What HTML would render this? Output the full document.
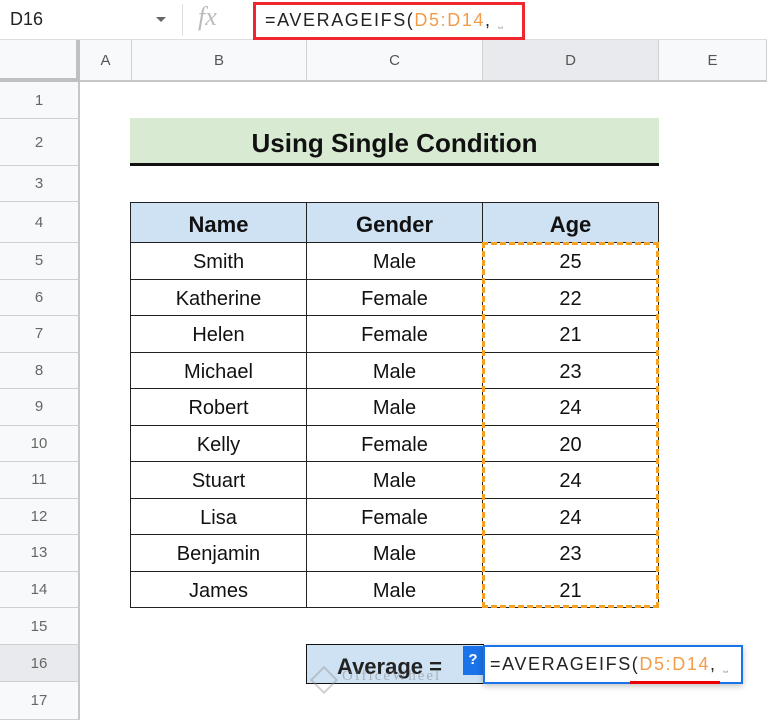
<!DOCTYPE html><html><head><style>
*{margin:0;padding:0;box-sizing:border-box}
body{width:767px;height:722px;position:relative;background:#fff;font-family:"Liberation Sans",Arial,sans-serif;overflow:hidden}
.a{position:absolute}
.rh{position:absolute;left:0;width:80px;background:#f8f9fa;border-right:2px solid #c7c7c7;border-bottom:1px solid #d0d0d0;color:#666;font-size:15px;display:flex;align-items:center;justify-content:center}
.ch{position:absolute;top:40px;height:42px;background:#f8f9fa;border-right:1px solid #d0d0d0;border-bottom:2px solid #c7c7c7;color:#555;font-size:15px;display:flex;align-items:center;justify-content:center}
.c{position:absolute;display:flex;align-items:center;justify-content:center;font-size:20px;color:#111;border-right:1.5px solid #222;border-bottom:1.5px solid #222;padding-top:4px}
.f{font-size:18px;color:#222;font-family:'Liberation Sans Narrow','Liberation Sans',sans-serif;letter-spacing:1.6px}
</style></head><body>
<div class="a" style="left:0;top:0;width:767px;height:40px;background:#fff;border-bottom:1px solid #ddd"></div>
<div class="a" style="left:10px;top:9px;font-size:18px;color:#222">D16</div>
<div class="a" style="left:156px;top:17px;width:0;height:0;border-left:5px solid transparent;border-right:5px solid transparent;border-top:5px solid #666"></div>
<div class="a" style="left:182px;top:4px;width:1px;height:32px;background:#ddd"></div>
<div class="a" style="left:198px;top:2px;font-size:26px;font-style:italic;color:#bbb;font-family:'Liberation Serif',serif">fx</div>
<div class="a" style="left:253px;top:2px;width:272px;height:38px;border:3px solid #f0262e"></div>
<div class="a f" style="left:265px;top:10px">=AVERAGEIFS(<span style="color:#f39c4a">D5:D14</span>, <span style="color:#aaa;font-size:12px">⎵</span></div>
<div class="a" style="left:0;top:40px;width:80px;height:42px;background:#f8f9fa;border-right:4px solid #c0c0c0;border-bottom:4px solid #c0c0c0"></div>
<div class="ch" style="left:80px;width:52px">A</div>
<div class="ch" style="left:132px;width:175px">B</div>
<div class="ch" style="left:307px;width:176px">C</div>
<div class="ch" style="left:483px;width:176px;background:#e8eaed">D</div>
<div class="ch" style="left:659px;width:108px">E</div>
<div class="rh" style="top:82px;height:37px">1</div>
<div class="rh" style="top:119px;height:47px">2</div>
<div class="rh" style="top:166px;height:36px">3</div>
<div class="rh" style="top:202px;height:41px">4</div>
<div class="rh" style="top:243px;height:36.5px">5</div>
<div class="rh" style="top:279.5px;height:36.5px">6</div>
<div class="rh" style="top:316px;height:36.5px">7</div>
<div class="rh" style="top:352.5px;height:36.5px">8</div>
<div class="rh" style="top:389px;height:36.5px">9</div>
<div class="rh" style="top:425.5px;height:36.5px">10</div>
<div class="rh" style="top:462px;height:36.5px">11</div>
<div class="rh" style="top:498.5px;height:36.5px">12</div>
<div class="rh" style="top:535px;height:36.5px">13</div>
<div class="rh" style="top:571.5px;height:36.5px">14</div>
<div class="rh" style="top:608px;height:37px">15</div>
<div class="rh" style="top:645px;height:37px;background:#e8eaed">16</div>
<div class="rh" style="top:682px;height:38px">17</div>
<div class="a" style="left:130px;top:118px;width:529px;height:48px;background:#d9ead3;border-bottom:3px solid #111;display:flex;align-items:center;justify-content:center;font-weight:bold;font-size:26px;color:#111;padding-top:5px">Using Single Condition</div>
<div class="a" style="left:130px;top:202px;width:529px;height:406px;border-left:1.5px solid #222;border-top:1.5px solid #222"></div>
<div class="c" style="left:131px;top:203px;width:176px;height:40px;background:#cfe2f3;font-weight:bold;font-size:22px">Name</div>
<div class="c" style="left:307px;top:203px;width:176px;height:40px;background:#cfe2f3;font-weight:bold;font-size:22px">Gender</div>
<div class="c" style="left:483px;top:203px;width:176px;height:40px;background:#cfe2f3;font-weight:bold;font-size:22px">Age</div>
<div id="rows"></div>
<script>
var d=[["Smith","Male",25],["Katherine","Female",22],["Helen","Female",21],["Michael","Male",23],["Robert","Male",24],["Kelly","Female",20],["Stuart","Male",24],["Lisa","Female",24],["Benjamin","Male",23],["James","Male",21]];
var h="";d.forEach(function(r,i){var t=243+i*36.5;
h+='<div class="c" style="left:131px;top:'+t+'px;width:176px;height:36.5px">'+r[0]+'</div>';
h+='<div class="c" style="left:307px;top:'+t+'px;width:176px;height:36.5px">'+r[1]+'</div>';
h+='<div class="c" style="left:483px;top:'+t+'px;width:176px;height:36.5px">'+r[2]+'</div>';});
document.getElementById("rows").innerHTML=h;
</script>
<div class="a" style="left:482px;top:242px;width:177px;height:366px;border:3px dashed #f6a024"></div>
<div class="a" style="left:306px;top:644px;width:178px;height:40px;background:#cfe2f3;border:1.5px solid #111;font-weight:bold;font-size:22px;color:#222;padding:9px 0 0 30px">Average =</div>
<div class="a" style="left:463px;top:646px;width:20px;height:29px;background:#1a73e8;color:#fff;font-weight:bold;font-size:15px;text-align:center;padding-top:5px">?</div>
<div class="a" style="left:483px;top:645px;width:260px;height:39px;background:#fff;border:2.5px solid #1a73e8;box-shadow:0 2px 6px rgba(0,0,0,.25)"></div>
<div class="a f" style="left:490px;top:654px">=AVERAGEIFS(<span style="color:#f39c4a">D5:D14</span>, <span style="color:#aaa;font-size:12px">⎵</span></div>
<div class="a" style="left:630px;top:681px;width:90px;height:3px;background:#e00"></div>
<div class="a" style="left:342px;top:668px;font-family:'Liberation Serif',serif;font-size:15px;letter-spacing:2px;color:rgba(120,120,120,.45)">OfficeWheel</div>
<div class="a" style="left:314px;top:670px;width:20px;height:20px;border:2px solid rgba(140,140,140,.4);transform:rotate(45deg)"></div>
</body></html>
